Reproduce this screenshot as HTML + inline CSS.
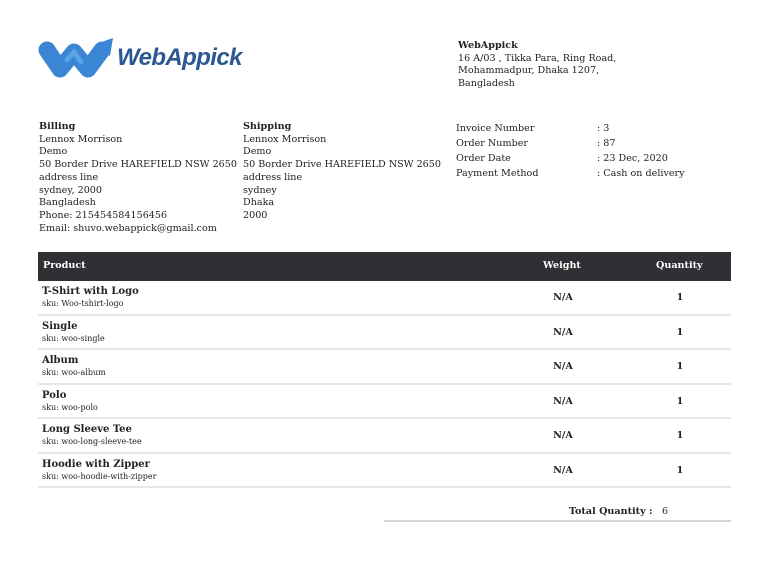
<!DOCTYPE html>
<html><head><meta charset="utf-8"><style>
*{margin:0;padding:0;box-sizing:border-box}
body{width:768px;height:568px;background:#fff;position:relative;font-family:"DejaVu Serif","Liberation Serif",serif;font-size:9.6px;color:#222;overflow:hidden}
.a{position:absolute;white-space:nowrap}
.lh{line-height:12.7px}
b{font-weight:bold}
.hdr{position:absolute;left:38px;top:252px;width:693px;height:29px;background:#2f3033;color:#fff;font-weight:bold}
.row{position:absolute;left:38px;width:693px;height:34.5px;border-bottom:2px solid #e6e6e6}
.row .n{position:absolute;left:4px;top:5px;font-weight:bold;font-size:10px}
.row .s{position:absolute;left:4px;top:18px;font-size:8px}
.row .w{position:absolute;left:505px;width:40px;text-align:center;top:11px;font-weight:bold}
.row .q{position:absolute;left:622px;width:40px;text-align:center;top:11px;font-weight:bold}
</style></head><body>
<svg class="a" style="left:36px;top:36px" width="80" height="44" viewBox="0 0 80 44">
<path d="M11 14 L24 33 L38 16 L52 33 L66 14" fill="none" stroke="#3a86d4" stroke-width="17" stroke-linecap="round" stroke-linejoin="round"/>
<path d="M60 8 L77 2 L74 20 Z" fill="#3a86d4"/>
<path d="M31 24 L38 16 L45 26" fill="none" stroke="#59a4e6" stroke-width="5" stroke-linecap="round"/>
</svg>
<div class="a" style="left:117px;top:44px;font-family:'Liberation Sans',sans-serif;font-weight:bold;font-style:italic;font-size:24px;color:#2b5893;letter-spacing:-0.6px">WebAppick</div>

<div class="a lh" style="left:458px;top:40px"><b>WebAppick</b><br>16 A/03 , Tikka Para, Ring Road,<br>Mohammadpur, Dhaka 1207,<br>Bangladesh</div>

<div class="a lh" style="left:39px;top:121px"><b>Billing</b><br>Lennox Morrison<br>Demo<br>50 Border Drive HAREFIELD NSW 2650<br>address line<br>sydney, 2000<br>Bangladesh<br>Phone: 215454584156456<br>Email: shuvo.webappick@gmail.com</div>
<div class="a lh" style="left:243px;top:121px"><b>Shipping</b><br>Lennox Morrison<br>Demo<br>50 Border Drive HAREFIELD NSW 2650<br>address line<br>sydney<br>Dhaka<br>2000</div>

<div class="a" style="left:456px;top:121px;line-height:15px">Invoice Number<br>Order Number<br>Order Date<br>Payment Method</div>
<div class="a" style="left:597px;top:121px;line-height:15px">: 3<br>: 87<br>: 23 Dec, 2020<br>: Cash on delivery</div>

<div class="hdr"><span class="a" style="left:5px;top:8px">Product</span><span class="a" style="left:505px;top:8px">Weight</span><span class="a" style="left:618px;top:8px">Quantity</span></div>

<div class="row" style="top:281px"><div class="n">T-Shirt with Logo</div><div class="s">sku: Woo-tshirt-logo</div><div class="w">N/A</div><div class="q">1</div></div>
<div class="row" style="top:315.5px"><div class="n">Single</div><div class="s">sku: woo-single</div><div class="w">N/A</div><div class="q">1</div></div>
<div class="row" style="top:350px"><div class="n">Album</div><div class="s">sku: woo-album</div><div class="w">N/A</div><div class="q">1</div></div>
<div class="row" style="top:384.5px"><div class="n">Polo</div><div class="s">sku: woo-polo</div><div class="w">N/A</div><div class="q">1</div></div>
<div class="row" style="top:419px"><div class="n">Long Sleeve Tee</div><div class="s">sku: woo-long-sleeve-tee</div><div class="w">N/A</div><div class="q">1</div></div>
<div class="row" style="top:453.5px"><div class="n">Hoodie with Zipper</div><div class="s">sku: woo-hoodie-with-zipper</div><div class="w">N/A</div><div class="q">1</div></div>

<div class="a" style="left:569px;top:506px;font-weight:bold">Total Quantity :</div>
<div class="a" style="left:662px;top:506px">6</div>
<div class="a" style="left:384px;top:520px;width:347px;height:2px;background:#d8d8d8"></div>
</body></html>
